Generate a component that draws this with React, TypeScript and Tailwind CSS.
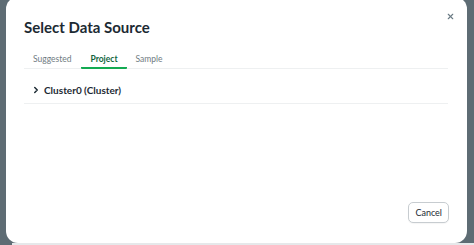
import { ChevronRight, X } from 'lucide-react'

const font = { fontFamily: 'Lato, "Noto Sans", sans-serif' }

export default function App() {
    return (
        <div className="w-[474px] h-[245px] bg-[#5e6c74] flex flex-col overflow-hidden" style={font}>
            <div className="relative -mt-[3px] ml-[6px] mr-[7px] h-[246px] bg-white rounded-[12px] flex flex-col pl-[18px] pr-[19px]">
                <button className="absolute top-[11px] right-[9px] w-4 h-4 flex items-center justify-center text-[#6b7b85]">
                    <X className="h-[9px] w-[9px]" strokeWidth={3} />
                </button>

                <h1 className="mt-[18px] text-[15px] leading-[24px] font-bold text-[#1c2a33]">
                    Select Data Source
                </h1>

                {/* Tabs */}
                <div className="mt-[9px] flex border-b border-[#eef0f1] text-[8.5px] leading-[12px]">
                    <div className="px-[9px] pt-[5px] pb-[4px] -mb-px text-[#6f7b82]">Suggested</div>
                    <div className="ml-[1px] px-[9px] pt-[5px] pb-[2px] -mb-px font-bold text-[#10653d] border-b-2 border-[#13aa52] rounded-[1px]">
                        Project
                    </div>
                    <div className="px-[9px] pt-[5px] pb-[4px] -mb-px text-[#6f7b82]">Sample</div>
                </div>

                {/* Cluster row */}
                <div className="flex items-center pt-[15px] pb-[7px] leading-[12px] border-b border-[#eef0f1] pl-[7px]">
                    <ChevronRight className="h-[10px] w-[10px] text-[#1c2a33]" strokeWidth={3.5} />
                    <span className="ml-[3px] text-[10px] font-bold text-[#1c2a33]">Cluster0 (Cluster)</span>
                </div>

                <div className="flex-1" />

                <div className="flex justify-end mb-[20px] -mr-[1px]">
                    <button className="h-[21px] px-[6px] rounded-[5px] border border-[#c7ccd0] bg-white text-[9px] text-[#1c2a33] shadow-[0_1px_1px_rgba(0,0,0,0.04)]">
                        Cancel
                    </button>
                </div>
            </div>
            <div className="flex-1 bg-[#e6e8ea] ml-[12px]" />
        </div>
    )
}
